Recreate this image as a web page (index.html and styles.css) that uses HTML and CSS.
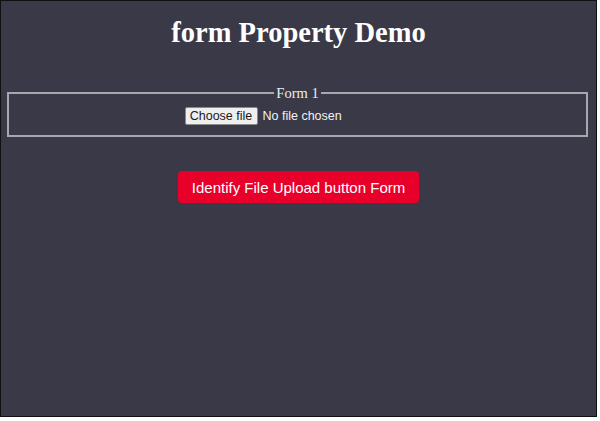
FILE: index.html
```html
<!DOCTYPE html>
<html>
<head>
<meta charset="utf-8">
<title>form Property Demo</title>
<link rel="stylesheet" href="styles.css">
</head>
<body>
<div class="page">
  <h1 class="title">form Property Demo</h1>
  <form class="upload-form">
    <fieldset class="group">
      <legend class="group-legend">Form 1</legend>
      <label class="file-field">
        <input class="file-input" type="file">
        <span class="file-button">Choose file</span>
        <span class="file-name">No file chosen</span>
      </label>
    </fieldset>
  </form>
  <button class="action" type="button">Identify File Upload button Form</button>
</div>
</body>
</html>
```
FILE: styles.css
```css
html, body {
  margin: 0;
  padding: 0;
  background: #ffffff;
}
.page {
  box-sizing: border-box;
  width: 597px;
  height: 417px;
  border: 1px solid #111114;
  background: #3a3947;
  display: flex;
  flex-direction: column;
  align-items: center;
  font-family: "Liberation Serif", serif;
  color: #ffffff;
}
.title {
  margin: 15px 0 0;
  font-size: 28.5px;
  line-height: 33px;
  font-weight: bold;
  color: #ffffff;
}
.upload-form {
  align-self: stretch;
  margin: 36px 8px 0 6px;
}
.group {
  margin: 0;
  padding: 6px 10px 10px;
  border: 2px solid #a7a7ae;
  display: flex;
  justify-content: center;
  min-width: 0;
}
.group-legend {
  margin: 0 auto;
  padding: 0 2px;
  font-size: 14.5px;
  line-height: 16px;
  color: #ececf0;
}
.file-field {
  width: 226px;
  display: flex;
  align-items: center;
  gap: 5px;
  font: 12.5px "Liberation Sans", Arial, sans-serif;
  color: #f2f2f2;
  cursor: pointer;
}
.file-input {
  display: none;
}
.file-button {
  box-sizing: border-box;
  width: 73px;
  height: 18px;
  line-height: 16px;
  text-align: center;
  background: #efefef;
  color: #1a1a1a;
  border: 1px solid #8a8a8a;
  border-radius: 2px;
}
.file-name {
  white-space: nowrap;
}
.action {
  margin-top: 34px;
  width: 241px;
  height: 32px;
  padding: 0;
  border: none;
  border-radius: 4px;
  background: #e8002b;
  color: #ffffff;
  font: 15px "Liberation Sans", Arial, sans-serif;
  cursor: pointer;
}
```
